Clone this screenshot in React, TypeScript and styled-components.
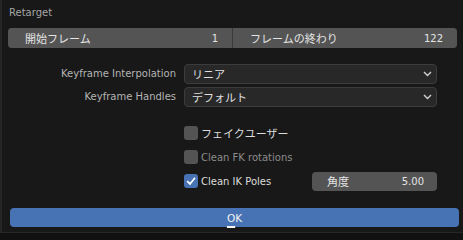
import React from 'react'
import styled, { createGlobalStyle } from 'styled-components'

const GlobalStyle = createGlobalStyle`
  html, body {
    margin: 0;
    padding: 0;
    background: #111111;
  }
  body {
    font-family: 'DejaVu Sans', 'Noto Sans CJK JP', sans-serif;
    font-size: 10px;
    -webkit-font-smoothing: antialiased;
  }
`

const Panel = styled.div`
  box-sizing: border-box;
  width: 463px;
  height: 233px;
  background: #181818;
  border-left: 2px solid #262626;
  border-bottom: 1px solid #262626;
  padding: 6px 6px 0 6px;
  display: flex;
  flex-direction: column;
`

const Title = styled.div`
  height: 14px;
  line-height: 14px;
  padding-left: 1px;
  color: #a6a6a6;
`

const FrameRow = styled.div`
  display: flex;
  gap: 1px;
  height: 20px;
  margin-top: 8px;
  border-radius: 4px;
  overflow: hidden;
  background: #3a3a3a;
`

const NumField = styled.div`
  flex: 1;
  display: flex;
  align-items: center;
  justify-content: space-between;
  background: #545454;
  color: #e4e4e4;
  padding: 0 14px 0 17px;
`

const Jp = styled.span`
  font-family: 'Noto Sans CJK JP', 'DejaVu Sans', sans-serif;
  font-size: 11px;
`

const PropGrid = styled.div`
  display: grid;
  grid-template-columns: 168px 253px;
  column-gap: 8px;
  row-gap: 3px;
  margin-top: 16px;
`

const PropLabel = styled.div`
  text-align: right;
  line-height: 20px;
  color: #b4b4b4;
`

const Dropdown = styled.div`
  box-sizing: border-box;
  height: 20px;
  display: flex;
  align-items: center;
  justify-content: space-between;
  background: #282828;
  border: 1px solid #3c3c3c;
  border-radius: 4px;
  padding: 0 4px 0 7px;
  color: #e0e0e0;
`

const Options = styled.div`
  display: flex;
  flex-direction: column;
  margin-top: 14px;
  padding-left: 176px;
`

const OptionRow = styled.div`
  height: 24px;
  display: flex;
  align-items: center;
`

const CheckLabel = styled.label<{ $dim?: boolean }>`
  display: flex;
  align-items: center;
  gap: 3px;
  width: 128px;
  color: ${p => (p.$dim ? '#8c8c8c' : '#dcdcdc')};
`

const Box = styled.span<{ $on?: boolean }>`
  box-sizing: border-box;
  width: 14px;
  height: 14px;
  border-radius: 3px;
  background: ${p => (p.$on ? '#4772b3' : '#545454')};
  display: flex;
  align-items: center;
  justify-content: center;
`

const AngleField = styled.div`
  width: 125px;
  height: 19px;
  box-sizing: border-box;
  display: flex;
  align-items: center;
  justify-content: space-between;
  background: #545454;
  border-radius: 4px;
  padding: 0 13px 0 15px;
  color: #e4e4e4;
`

const OkButton = styled.div`
  margin: 15px 0 0 2px;
  width: 449px;
  height: 19px;
  border-radius: 4px;
  background: #4772b3;
  color: #f4f4f4;
  display: flex;
  align-items: center;
  justify-content: center;
  font-size: 10.5px;
`

const Hotkey = styled.span`
  text-decoration: underline;
  text-decoration-thickness: 1.5px;
  text-underline-offset: 4px;
`

const Chevron = () => (
  <svg width="9" height="6" viewBox="0 0 9 6">
    <path d="M1 1 L4.5 4.5 L8 1" fill="none" stroke="#d0d0d0" strokeWidth="1.4" />
  </svg>
)

const Check = () => (
  <svg width="12" height="12" viewBox="0 0 12 12">
    <path d="M2.2 6.2 L5 9 L10 2.8" fill="none" stroke="#ffffff" strokeWidth="1.8" />
  </svg>
)

const App = () => {
  return (
    <>
      <GlobalStyle />
      <Panel>
        <Title>Retarget</Title>
        <FrameRow>
          <NumField>
            <Jp>開始フレーム</Jp>
            <span>1</span>
          </NumField>
          <NumField>
            <Jp>フレームの終わり</Jp>
            <span>122</span>
          </NumField>
        </FrameRow>
        <PropGrid>
          <PropLabel>Keyframe Interpolation</PropLabel>
          <Dropdown>
            <Jp>リニア</Jp>
            <Chevron />
          </Dropdown>
          <PropLabel>Keyframe Handles</PropLabel>
          <Dropdown>
            <Jp>デフォルト</Jp>
            <Chevron />
          </Dropdown>
        </PropGrid>
        <Options>
          <OptionRow>
            <CheckLabel>
              <Box />
              <Jp>フェイクユーザー</Jp>
            </CheckLabel>
          </OptionRow>
          <OptionRow>
            <CheckLabel $dim>
              <Box />
              Clean FK rotations
            </CheckLabel>
          </OptionRow>
          <OptionRow>
            <CheckLabel>
              <Box $on>
                <Check />
              </Box>
              Clean IK Poles
            </CheckLabel>
            <AngleField>
              <Jp>角度</Jp>
              <span>5.00</span>
            </AngleField>
          </OptionRow>
        </Options>
        <OkButton>
          <span>
            <Hotkey>O</Hotkey>K
          </span>
        </OkButton>
      </Panel>
    </>
  )
}

export default App
